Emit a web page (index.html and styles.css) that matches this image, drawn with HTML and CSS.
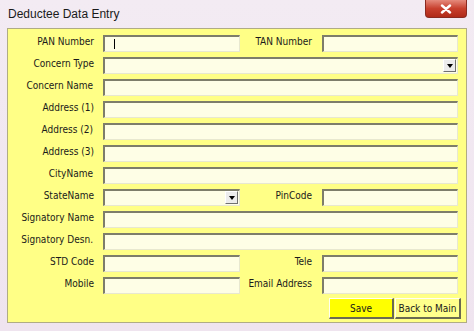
FILE: index.html
```html
<!DOCTYPE html>
<html>
<head>
<meta charset="utf-8">
<link rel="stylesheet" href="styles.css">
</head>
<body>
<div class="window">
  <div class="titlebar">
    <span class="title">Deductee Data Entry</span>
    <span class="close"><svg width="12" height="10" viewBox="0 0 12 10"><path d="M2 1.5 L10 8.5 M10 1.5 L2 8.5" stroke="#fff" stroke-width="2.4" stroke-linecap="round"/></svg></span>
  </div>
  <div class="panel">
    <div class="grid">
      <label class="lbl">PAN Number</label>
      <div class="field"><span class="caret"></span></div>
      <label class="lbl">TAN Number</label>
      <div class="field"></div>

      <label class="lbl">Concern Type</label>
      <div class="field combo span3"><span class="drop"></span></div>

      <label class="lbl">Concern Name</label>
      <div class="field span3"></div>

      <label class="lbl">Address (1)</label>
      <div class="field span3"></div>

      <label class="lbl">Address (2)</label>
      <div class="field span3"></div>

      <label class="lbl">Address (3)</label>
      <div class="field span3"></div>

      <label class="lbl">CityName</label>
      <div class="field span3"></div>

      <label class="lbl">StateName</label>
      <div class="field combo"><span class="drop"></span></div>
      <label class="lbl">PinCode</label>
      <div class="field"></div>

      <label class="lbl">Signatory Name</label>
      <div class="field span3"></div>

      <label class="lbl">Signatory Desn.</label>
      <div class="field span3"></div>

      <label class="lbl">STD Code</label>
      <div class="field"></div>
      <label class="lbl">Tele</label>
      <div class="field"></div>

      <label class="lbl">Mobile</label>
      <div class="field"></div>
      <label class="lbl">Email Address</label>
      <div class="field"></div>
    </div>
    <div class="buttons">
      <button class="btn save">Save</button>
      <button class="btn back">Back to Main</button>
    </div>
  </div>
</div>
</body>
</html>
```

FILE: styles.css
```css
html, body {
  margin: 0;
  padding: 0;
}
body {
  width: 474px;
  height: 331px;
  overflow: hidden;
  background: #f1e7f1;
  font-family: "DejaVu Sans Condensed", "Liberation Sans", sans-serif;
}
.window {
  width: 474px;
  height: 331px;
  background: linear-gradient(#f3ebf3, #efe4ef);
}
.titlebar {
  height: 28px;
  display: flex;
  align-items: flex-start;
  justify-content: space-between;
  padding-left: 8px;
  padding-right: 7px;
}
.title {
  font-family: "Liberation Sans", sans-serif;
  font-size: 12px;
  color: #1a1a1a;
  margin-top: 7px;
}
.close {
  width: 42px;
  height: 18px;
  box-sizing: border-box;
  border: 1px solid #8a2a20;
  border-top: none;
  border-radius: 0 0 4px 4px;
  background: linear-gradient(#e58a7c, #c8402e 50%, #b02a18);
  display: flex;
  align-items: center;
  justify-content: center;
}
.panel {
  margin-left: 7px;
  width: 460px;
  height: 295px;
  box-sizing: border-box;
  background: #ffff86;
  border: 1px solid #b0ac84;
  padding-top: 6px;
}
.grid {
  display: grid;
  grid-template-columns: 95px 137px 82px 136px;
  grid-auto-rows: 17px;
  row-gap: 5px;
}
.lbl {
  font-family: "DejaVu Sans Condensed", "DejaVu Sans", sans-serif;
  font-size: 10px;
  color: #1a1a1a;
  text-align: right;
  padding-right: 9px;
  line-height: 14px;
  white-space: nowrap;
}
.lbl:nth-child(4n+3) {
  padding-right: 10px;
}
.field {
  box-sizing: border-box;
  background: #fefee6;
  border-top: 2px solid #7d7d6a;
  border-left: 2px solid #7d7d6a;
  border-right: 1px solid #e8e8d0;
  border-bottom: 1px solid #e8e8d0;
  position: relative;
}
.span3 {
  grid-column: span 3;
}
.caret {
  position: absolute;
  left: 9px;
  top: 2px;
  width: 1px;
  height: 10px;
  background: #000;
}
.drop {
  position: absolute;
  right: 1px;
  top: 0px;
  width: 13px;
  height: 13px;
  box-sizing: border-box;
  background: #ececec;
  border-top: 1px solid #fff;
  border-left: 1px solid #fff;
  border-right: 1px solid #707070;
  border-bottom: 1px solid #707070;
}
.drop::after {
  content: "";
  position: absolute;
  left: 3px;
  top: 4px;
  border-left: 3px solid transparent;
  border-right: 3px solid transparent;
  border-top: 4px solid #000;
}
.buttons {
  display: flex;
  justify-content: flex-end;
  gap: 1px;
  margin-top: 4px;
  padding-right: 5px;
}
.btn {
  height: 21px;
  box-sizing: border-box;
  font-family: "DejaVu Sans Condensed", "DejaVu Sans", sans-serif;
  font-size: 10px;
  color: #1a1a1a;
  padding: 0;
  border-top: 1px solid #fffff0;
  border-left: 1px solid #fffff0;
  border-right: 2px solid #6a6a50;
  border-bottom: 2px solid #6a6a50;
}
.save {
  width: 65px;
  background: #ffff00;
}
.back {
  width: 66px;
  background: #ffff8c;
}
```
